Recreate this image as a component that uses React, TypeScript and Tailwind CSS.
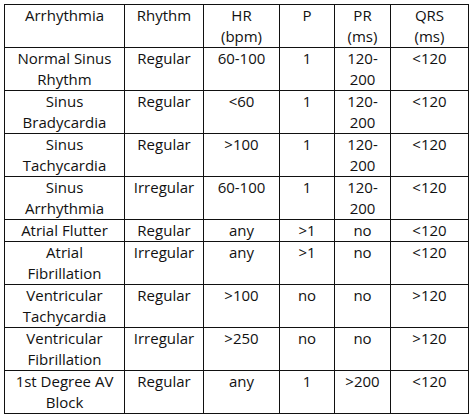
import React from 'react';

type Row = {
  name: string[];
  rhythm: string;
  hr: string;
  p: string;
  pr: string[];
  qrs: string;
  tall: boolean;
};

const rows: Row[] = [
  { name: ['Normal Sinus', 'Rhythm'], rhythm: 'Regular', hr: '60-100', p: '1', pr: ['120-', '200'], qrs: '<120', tall: true },
  { name: ['Sinus', 'Bradycardia'], rhythm: 'Regular', hr: '<60', p: '1', pr: ['120-', '200'], qrs: '<120', tall: true },
  { name: ['Sinus', 'Tachycardia'], rhythm: 'Regular', hr: '>100', p: '1', pr: ['120-', '200'], qrs: '<120', tall: true },
  { name: ['Sinus', 'Arrhythmia'], rhythm: 'Irregular', hr: '60-100', p: '1', pr: ['120-', '200'], qrs: '<120', tall: true },
  { name: ['Atrial Flutter'], rhythm: 'Regular', hr: 'any', p: '>1', pr: ['no'], qrs: '<120', tall: false },
  { name: ['Atrial', 'Fibrillation'], rhythm: 'Irregular', hr: 'any', p: '>1', pr: ['no'], qrs: '<120', tall: true },
  { name: ['Ventricular', 'Tachycardia'], rhythm: 'Regular', hr: '>100', p: 'no', pr: ['no'], qrs: '>120', tall: true },
  { name: ['Ventricular', 'Fibrillation'], rhythm: 'Irregular', hr: '>250', p: 'no', pr: ['no'], qrs: '>120', tall: true },
  { name: ['1st Degree AV', 'Block'], rhythm: 'Regular', hr: 'any', p: '1', pr: ['>200'], qrs: '<120', tall: true },
];

const cell = 'border border-[#111] align-top text-center p-0 leading-[21px]';

const Lines = ({ lines }: { lines: string[] }) => (
  <>
    {lines.map((l, i) => (
      <div key={i}>{l}</div>
    ))}
  </>
);

export default function App() {
  return (
    <div className="w-[474px] h-[418px] bg-white pt-[4px] pl-[4px]">
      <table
        className="table-fixed border-collapse text-[15px] text-[#111]"
        style={{ fontFamily: '"Open Sans", "Noto Sans", sans-serif', width: 464 }}
      >
        <colgroup>
          <col style={{ width: 120 }} />
          <col style={{ width: 79 }} />
          <col style={{ width: 76 }} />
          <col style={{ width: 55 }} />
          <col style={{ width: 56 }} />
          <col style={{ width: 78 }} />
        </colgroup>
        <thead>
          <tr className="h-[42px]">
            <th className={`${cell} font-normal`}>Arrhythmia</th>
            <th className={`${cell} font-normal`}>Rhythm</th>
            <th className={`${cell} font-normal`}>
              <Lines lines={['HR', '(bpm)']} />
            </th>
            <th className={`${cell} font-normal`}>P</th>
            <th className={`${cell} font-normal`}>
              <Lines lines={['PR', '(ms)']} />
            </th>
            <th className={`${cell} font-normal`}>
              <Lines lines={['QRS', '(ms)']} />
            </th>
          </tr>
        </thead>
        <tbody>
          {rows.map((r, i) => (
            <tr key={i} className={r.tall ? 'h-[43px]' : 'h-[21px]'}>
              <td className={cell}>
                <Lines lines={r.name} />
              </td>
              <td className={cell}>{r.rhythm}</td>
              <td className={cell}>{r.hr}</td>
              <td className={cell}>{r.p}</td>
              <td className={cell}>
                <Lines lines={r.pr} />
              </td>
              <td className={cell}>{r.qrs}</td>
            </tr>
          ))}
        </tbody>
      </table>
    </div>
  );
}
